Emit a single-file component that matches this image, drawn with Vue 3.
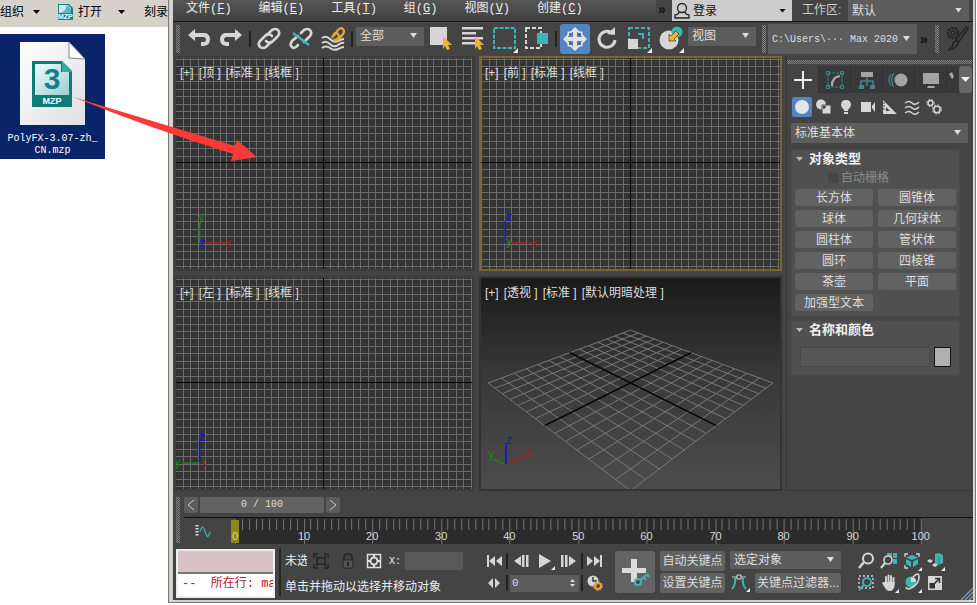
<script setup>
import { ref } from 'vue'

const fmt = n => Math.round(n * 10) / 10

const menus = [
  { name: '文件', key: 'F' },
  { name: '编辑', key: 'E' },
  { name: '工具', key: 'T' },
  { name: '组', key: 'G' },
  { name: '视图', key: 'V' },
  { name: '创建', key: 'C' }
]

const L = '#d6d6d6'
const T = '#3fb4b4'
const corner = '<path d="M27 23v5h-5z" fill="#eee"/>'

const icons = {
  undo: `<path d="M3 10 10 4v4h10q5 1 5 6.500T19 21h-3v-4h3q2-.5 2-2.500T19 12h-9v4z" fill="${L}"/>`,
  redo: `<path d="M25 10 18 4v4H8q-5 1-5 6.500T9 21h3v-4H9q-2-.5-2-2.500T9 12h9v4z" fill="${L}"/>`,
  link: `<g fill="none" stroke="${L}" stroke-width="2.600" stroke-linecap="round"><path d="M12 10l5-5q3-2 6 0 2.500 3 0 6l-6 6q-3 2-6-1"/><path d="M16 17l-5 5q-3 2-6 0-2.500-3 0-6l6-6q3-2 6 1"/></g>`,
  unlink: `<g fill="none" stroke="${L}" stroke-width="2.600" stroke-linecap="round"><path d="M14 8l3-3q3-2 6 0 2.500 3 0 6l-6 6M11 20l-2 2q-3 2-5-1-1-2 1-5l6-5"/></g><path d="M6 8l16 12" stroke="${T}" stroke-width="2.200"/>`,
  bind: `<g fill="none" stroke="${L}" stroke-width="2"><path d="M3 13q4-3 8 1t8 2 6-2M3 18q4-3 8 1t8 1 6-2M3 23q4-3 8 0t8 1 6-2"/></g><g fill="none" stroke="#e8a33a" stroke-width="2.200"><path d="M15 11l4-6q3-3 5-1t0 5l-4 5q-3 2-5 0"/><path d="M13 13l2-4q2-2 4 0t0 4l-3 3"/></g>`,
  pick: `<path d="M3 2h17v18H3z" fill="${L}"/><path d="M16 11l9 9h-4l2 4-3 1-2-4-2 3z" fill="#f6b034"/>`,
  byname: `<g fill="${L}"><path d="M3 2h21v2.500H3zM3 7h14v2.500H3zM3 12h21v2.500H3zM3 17h13v2.500H3z"/></g><path d="M16 11l9 9h-4l2 4-3 1-2-4-2 3z" fill="#f6b034"/>`,
  rect: `<rect x="3" y="3" width="21" height="20" fill="none" stroke="${T}" stroke-width="2" stroke-dasharray="4 1.500"/>` + corner,
  cross: `<rect x="3" y="3" width="15" height="20" fill="none" stroke="${L}" stroke-width="2" stroke-dasharray="4 2"/><path d="M14 8h11v11H14z" fill="${T}"/>`,
  move: `<path d="M14 2l5 5h-3v5h5V9l5 5-5 5v-3h-5v5h3l-5 5-5-5h3v-5H7v3l-5-5 5-5v3h5V7H9z" fill="#e4e4e4"/><path d="M8 11V8h3M17 8h3v3M20 17v3h-3M11 20H8v-3" fill="none" stroke="#e4e4e4" stroke-width="3"/><path d="M9 11V9h2M17 9h2v2M19 17v2h-2M11 19H9v-2" fill="none" stroke="#39465c" stroke-width="1.500"/>`,
  rotate: `<path d="M19 8a8 8 0 1 0 3 7" fill="none" stroke="${L}" stroke-width="3"/><path d="M14 9l8 1V2z" fill="${L}"/>`,
  scale: `<rect x="4" y="3" width="20" height="20" fill="none" stroke="${T}" stroke-width="2" stroke-dasharray="4 2"/><path d="M3 14h10v10H3z" fill="${L}"/><path d="M13 9h5v5" fill="none" stroke="${T}" stroke-width="2"/>` + corner,
  place: `<circle cx="12" cy="15" r="9.500" fill="${L}"/><circle cx="20" cy="7" r="5.500" fill="${T}"/><path d="M19 6l3 3-5 5 2 2h-7V9l2 2z" fill="#f6b034" stroke="#5f4818" stroke-width=".8"/>` + corner,
  brush: `<g fill="none" stroke="#252525"><circle cx="9" cy="8" r="5" stroke-width="2.400" stroke-dasharray="2.500 1"/><circle cx="9" cy="8" r="2" stroke-width="1.300"/><path d="M24 3l-9 14-3-2L22 2zM14 17q0 6-10 8 5-2 5-6 1-4 5-2z" stroke-width="1.500"/></g>`
}

const toolsA = ['undo', 'redo']
const toolsB = ['link', 'unlink', 'bind']
const toolsC = ['pick', 'byname', 'rect', 'cross']
const toolsD = ['move', 'rotate', 'scale', 'place']
const toolNames = {
  undo: '撤消', redo: '重做', link: '链接', unlink: '断开链接', bind: '绑定', pick: '选择', byname: '按名称选择',
  rect: '矩形选择', cross: '窗口/交叉', move: '移动', rotate: '旋转', scale: '缩放', place: '放置'
}

const G = '#a4a4a4'
const D = '#3a8888'
const tabs = [
  { id: '创建', svg: '<path d="M11 3h2v8h8v2h-8v8h-2v-8H3v-2h8z" fill="#eee"/>' },
  { id: '修改', svg: `<rect x="5" y="5" width="14" height="14" fill="none" stroke="${D}" stroke-dasharray="3 1"/><g fill="none" stroke="${D}"><path d="M3.500 3.500h3v3h-3zM17.500 3.500h3v3h-3zM3.500 17.500h3v3h-3zM17.500 17.500h3v3h-3z"/></g><path d="M9 18q0-9 8-10" fill="none" stroke="${G}" stroke-width="2.500"/>` },
  { id: '层次', svg: `<path d="M6 4h12v5H6z" fill="${G}"/><path d="M12 9v4M6 18v-5h12v5M12 13v5" fill="none" stroke="${D}" stroke-width="1.500"/><path d="M4 17h5v4H4zM15 17h5v4h-5z" fill="${D}"/>` },
  { id: '运动', svg: `<circle cx="14" cy="12" r="6.500" fill="${G}"/><path d="M7 5q-5 7 0 14M4 6q-4 6 0 12" fill="none" stroke="${D}" stroke-width="1.300"/>` },
  { id: '显示', svg: `<path d="M4 5h16v11H4zM9 18h6l1 2H8z" fill="${G}"/>` },
  { id: '实用程序', svg: `<path d="M2 6l3-2 2 5-2 2z" fill="${G}"/>` }
]

const cats = [
  { id: '几何体', svg: '<circle cx="10" cy="10" r="7" fill="#e4e4e4"/>' },
  { id: '图形', svg: `<circle cx="7" cy="7.500" r="5" fill="${L}"/><path d="M8 8h9v9H8z" fill="${L}" stroke="#444"/><path d="M9 9h3q0 3-3 3z" fill="#444"/>` },
  { id: '灯光', svg: `<path d="M10 3q5 0 5 5 0 2-3 5v1H8v-1Q5 10 5 8q0-5 5-5zM8 15h4v2H8z" fill="${L}"/>` },
  { id: '摄影机', svg: `<path d="M3 5h10v10H3zM14 9l3-4v10l-3-4z" fill="${L}"/>` },
  { id: '辅助对象', svg: `<path d="M3 3l14 14H3zm3 7v4h4z" fill="${L}" fill-rule="evenodd"/><path d="M3 6h2M3 9h2M3 12h2" stroke="#444"/>` },
  { id: '空间扭曲', svg: `<path d="M3 6q4-3 7 0t7-1M3 11q4-3 7 0t7-1M3 16q4-3 7 0t7-1" fill="none" stroke="${L}" stroke-width="1.400"/>` },
  { id: '系统', svg: `<g fill="none" stroke="${L}"><circle cx="6.500" cy="6" r="2.500" stroke-width="1.400" /><circle cx="6.500" cy="6" r="3.700" stroke-dasharray="1.500 1.500"/><circle cx="13" cy="12.500" r="3.200" stroke-width="1.500"/><circle cx="13" cy="12.500" r="4.600" stroke-dasharray="1.800 1.800"/></g>` }
]
const activeCat = ref('几何体')

const objects = ['长方体', '圆锥体', '球体', '几何球体', '圆柱体', '管状体', '圆环', '四棱锥', '茶壶', '平面', '加强型文本']

// Orthographic grid: evenly spaced lines around the view centre.
const flat = []
for (let i = -21; i <= 21; i++) {
  if (!i) continue
  const x = 150 + Math.round(i * 7.43)
  flat.push(`M${x} -10V230`)
  const y = 105 + Math.round(i * 7.43)
  flat.push(`M-10 ${y}H320`)
}
const flatPath = flat.join('')

// Perspective grid: ground-plane coordinates in [-1, 1] projected to the view.
const project = (u, v) => {
  const w = 1 - 0.171 * (u + v)
  return `${fmt(151 + (71.5 * (u - v)) / w)} ${fmt(105.5 + (35.6 * (u + v)) / w)}`
}
let persp = ''
for (let i = -7; i <= 7; i++) {
  if (!i) continue
  persp += `M${project(i / 7, -1)}L${project(i / 7, 1)}M${project(-1, i / 7)}L${project(1, i / 7)}`
}
const perspAxes = `M${project(0, -1)}L${project(0, 1)}M${project(-1, 0)}L${project(1, 0)}`

const R = '#b01820'
const B = '#1515b8'
const N = '#128a12'
const views = [
  {
    id: 'top', labels: ['[+]', '[顶 ]', '[标准 ]', '[线框 ]'],
    lines: [['M26 186V164', N], ['M30 186H52', R]],
    marks: [['y', 25, 164, N], ['z', 26, 190, B], ['x', 52, 190, R]]
  },
  {
    id: 'front', active: true, labels: ['[+]', '[前 ]', '[标准 ]', '[线框 ]'],
    lines: [['M25 186V164', B], ['M31 186H52', R]],
    marks: [['z', 26, 164, B], ['y', 26, 188, '#3c8a1c'], ['x', 52, 190, R]]
  },
  {
    id: 'left', labels: ['[+]', '[左 ]', '[标准 ]', '[线框 ]'],
    lines: [['M26 186V164', B], ['M8 186H26', N]],
    marks: [['z', 26, 164, B], ['x', 27, 189, R], ['y', 1, 189, N]]
  },
  {
    id: 'persp', persp: true, labels: ['[+]', '[透视 ]', '[标准 ]', '[默认明暗处理 ]'],
    lines: [['M26 187V166', B], ['M28 187L45 178', R], ['M24 187L13 182', N]],
    marks: [['z', 26, 167, B], ['x', 45, 180, R], ['y', 8, 181, N]]
  }
]

const ticks = Array.from({ length: 101 }, (_, i) => ({ i, x: Math.round(6 + i * 6.85), major: i % 10 === 0 }))

const play = {
  first: `<path d="M3 4h2v12H3zM11 5v10l-6-5zM18 5v10l-6-5z" fill="${L}"/>`,
  prev: `<path d="M9 5v10l-7-5zM10 4h2.500v12H10zM14 4h2.500v12H14z" fill="${L}"/>`,
  play: `<path d="M4 3l12 7-12 7z" fill="${L}"/><path d="M20 15v4h-4z" fill="#eee"/>`,
  next: `<path d="M11 5v10l7-5zM3 4h2.500v12H3zM7 4h2.500v12H7z" fill="${L}"/>`,
  last: `<path d="M15 4h2v12h-2zM9 5v10l6-5zM2 5v10l6-5z" fill="${L}"/>`,
  step: `<path d="M9 5v10l-5-5zM11 5v10l5-5z" fill="${L}"/>`,
  time: `<circle cx="8" cy="8" r="5.500" fill="${L}"/><path d="M8 4v4h4" stroke="#333" stroke-width="1.400" fill="none"/><circle cx="13" cy="13" r="3" fill="none" stroke="#e8a33a" stroke-width="2.200"/><circle cx="13" cy="13" r="4.500" fill="none" stroke="#e8a33a" stroke-dasharray="1.800 1.700"/>`
}

const c2 = '<path d="M20 16v4h-4z" fill="#eee"/>'
const navs = [
  ['缩放', `<circle cx="12" cy="7.500" r="5" fill="none" stroke="${L}" stroke-width="2"/><path d="M8 11l-5 6" stroke="${L}" stroke-width="2.500"/>`],
  ['缩放所有视图', `<path d="M8 2h5v5H8zM14 2h4v5h-4zM8 8h5v4H8zM14 8h4v5h-4z" fill="${T}"/><circle cx="9" cy="9" r="4" fill="#444" stroke="${L}" stroke-width="1.600"/><path d="M6 12l-4 5" stroke="${L}" stroke-width="2.200"/>`],
  ['最大化显示', `<path d="M3 6V3h3M14 3h3v3M3 14v3h3" fill="none" stroke="${L}" stroke-width="1.300"/><path d="M10 4l6 2.500-6 2.500-6-2.500zM4 8l5 2.500v5.500l-5-3zM16 8l-5 2.500v5.500l5-3z" fill="${T}"/>` + c2],
  ['所有视图最大化', `<path d="M10 3l4-1 4 2v8l-4 2-4-2z" fill="${T}"/><path d="M14 6v8" stroke="#286" /><path d="M2 10l3-2 3 2-3 2zM7 14l3-2 3 2-3 2z" fill="${L}"/>` + c2],
  ['缩放区域', `<rect x="3" y="3" width="14" height="12" fill="none" stroke="${L}" stroke-dasharray="2 2" stroke-width="1.400"/><circle cx="11" cy="9" r="4" fill="#444" stroke="${T}" stroke-width="1.800"/><path d="M8 12l-5 5" stroke="${T}" stroke-width="2.200"/>`],
  ['平移', `<path d="M7 10V4M9.500 10V2.500M12 10V3M14.500 11V5" stroke="${L}" stroke-width="1.900" stroke-linecap="round"/><path d="M6 9h9.500v4q-1 5-5 5-3 0-5-4L3 10l1.500-1z" fill="${L}"/>` + c2],
  ['环绕', `<circle cx="9" cy="9" r="5.500" fill="${T}"/><path d="M9 9h5q0-5-5-5z" fill="${L}"/><path d="M4 14q1 4 7 0t6-10-6 0" fill="none" stroke="${L}" stroke-width="1.600"/>` + c2],
  ['最大化视口', `<path d="M3 3h14v14H3z" fill="${L}"/><path d="M4.500 10H10v5.500H4.500z" fill="#333"/><path d="M9 11l5-5M10 5.500h4.500V10" stroke="#333" stroke-width="1.600" fill="none"/>`]
]
</script>

<template>
  <div class="desktop">
    <aside class="explorer">
      <div class="exbar">
        <button class="exbtn">组织<i class="tri"></i></button>
        <button class="exbtn open">
          <svg width="17" height="17" viewBox="0 0 17 17">
            <path d="M1 0h11l4 4v12H1z" fill="#0f8585" />
            <path d="M2 1h9l3 3v5H2z" fill="#cfe9e7" />
            <path d="M2 9q6 0 8-8l4 4v4z" fill="#5db9b2" />
            <text x="1" y="15" class="mzp-sm">MZP</text>
          </svg>
          打开<i class="tri"></i>
        </button>
        <button class="exbtn">刻录</button>
      </div>
      <figure class="file">
        <svg width="66" height="86" viewBox="0 0 66 86">
          <defs>
            <linearGradient id="pg" x1="0" y1="0" x2="1" y2="1"><stop offset="0" stop-color="#fff" /><stop offset="1" stop-color="#dedee4" /></linearGradient>
            <linearGradient id="tg" x1="0" y1="0" x2="1" y2="1"><stop offset="0" stop-color="#f2fbfb" /><stop offset="1" stop-color="#9bcfd1" /></linearGradient>
          </defs>
          <path d="M0 1h49l16 17v66H0z" fill="url(#pg)" />
          <path d="M49 1v16l16 1z" fill="#fff" stroke="#888" stroke-width="1" />
          <path d="M12 20h30l10 10v36H12z" fill="#0d7b78" />
          <path d="M15 23h26v8h8v23H15z" fill="url(#tg)" />
          <path d="M42 20v11h10z" fill="#35aaa2" />
          <text x="32" y="48" class="three">3</text>
          <text x="32" y="63" class="mzp">MZP</text>
        </svg>
        <figcaption>PolyFX-3.07-zh_<br>CN.mzp</figcaption>
      </figure>
    </aside>

    <main class="app">
      <header class="top">
        <nav class="menu">
          <a v-for="m in menus" :key="m.key" href="#">{{ m.name }}(<u>{{ m.key }}</u>)</a>
        </nav>
        <span class="more">»</span>
        <button class="login">
          <svg width="16" height="18" viewBox="0 0 16 18" fill="none" stroke="#222" stroke-width="1.300"><circle cx="8" cy="6" r="4.500" /><path d="M5 10q0 2-4 3v3h14v-3q-4-1-4-3" /></svg>
          登录<i class="tri"></i>
        </button>
        <label class="ws" for="ws">工作区:</label>
        <span class="dd wsdd"><select id="ws"><option>默认</option></select></span>
      </header>

      <div class="tools">
        <i class="grip"></i>
        <button v-for="t in toolsA" :key="t" class="tool" :aria-label="toolNames[t]"><svg width="28" height="28" viewBox="0 0 28 28" v-html="icons[t]"></svg></button>
        <i class="sep"></i>
        <button v-for="t in toolsB" :key="t" class="tool" :aria-label="toolNames[t]"><svg width="28" height="28" viewBox="0 0 28 28" v-html="icons[t]"></svg></button>
        <i class="sep"></i>
        <span class="dd small"><select aria-label="选择过滤器"><option>全部</option></select></span>
        <button v-for="t in toolsC" :key="t" class="tool" :aria-label="toolNames[t]"><svg width="28" height="28" viewBox="0 0 28 28" v-html="icons[t]"></svg></button>
        <i class="sep"></i>
        <button v-for="t in toolsD" :key="t" class="tool" :class="{ on: t === 'move' }" :aria-label="toolNames[t]"><svg width="28" height="28" viewBox="0 0 28 28" v-html="icons[t]"></svg></button>
        <span class="dd small"><select aria-label="参考坐标系"><option>视图</option></select></span>
        <i class="grip late"></i>
        <span class="dd path"><select aria-label="项目文件夹"><option>C:\Users\··· Max 2020</option></select></span>
        <span class="more">»</span>
        <i class="grip"></i>
        <button class="tool" aria-label="绘制"><svg width="28" height="28" viewBox="0 0 28 28" v-html="icons.brush"></svg></button>
      </div>

      <div class="work">
        <section class="views">
          <div v-for="v in views" :key="v.id" class="view" :class="{ active: v.active, persp: v.persp }">
            <svg class="scene" viewBox="0 0 302 212" preserveAspectRatio="xMidYMid slice">
              <template v-if="v.persp">
                <path :d="persp" fill="none" stroke="#787878" />
                <path :d="perspAxes" fill="none" stroke="#000" stroke-width="1.400" />
              </template>
              <g v-else shape-rendering="crispEdges">
                <path :d="flatPath" transform="translate(.5 .5)" fill="none" stroke="#6c6c6c" />
                <path d="M150.500 -10V230M-10 105.500H320" fill="none" stroke="#000" />
              </g>
              <path v-for="l in v.lines" :key="l[0]" :d="l[0]" fill="none" :stroke="l[1]" stroke-width="1.500" />
              <text v-for="m in v.marks" :key="m[0]" :x="m[1]" :y="m[2]" :fill="m[3]" class="mark">{{ m[0] }}</text>
            </svg>
            <div class="vlabels"><span v-for="t in v.labels" :key="t">{{ t }}</span></div>
          </div>
        </section>

        <aside class="panel">
          <i class="hgrip"></i>
          <div class="tabs">
            <button v-for="(t, i) in tabs" :key="t.id" class="tab" :class="{ on: i === 0 }" :aria-label="t.id"><svg width="24" height="24" viewBox="0 0 24 24" v-html="t.svg"></svg></button>
            <button class="tabmore" aria-label="更多"><i class="tri"></i></button>
          </div>
          <div class="cats">
            <button v-for="c in cats" :key="c.id" class="cat" :class="{ on: c.id === activeCat }" :aria-label="c.id" @click="activeCat = c.id"><svg width="20" height="20" viewBox="0 0 20 20" v-html="c.svg"></svg></button>
          </div>
          <span class="dd prim"><select aria-label="对象类别"><option>标准基本体</option></select></span>
          <section class="roll">
            <h2><i class="tri"></i>对象类型<i class="dots"></i></h2>
            <label class="auto"><input type="checkbox" disabled>自动栅格</label>
            <div class="objs"><button v-for="o in objects" :key="o">{{ o }}</button></div>
          </section>
          <section class="roll">
            <h2><i class="tri"></i>名称和颜色<i class="dots"></i></h2>
            <div class="namerow"><input type="text" aria-label="名称"><button class="swatch" aria-label="颜色"></button></div>
          </section>
        </aside>
      </div>

      <div class="time">
        <i class="grip tall"></i>
        <div class="timecol">
          <div class="slider">
            <button class="arr" aria-label="上一帧"><svg width="8" height="12" viewBox="0 0 8 12"><path d="M7 1L1 6l6 5" fill="none" stroke="#ccc" /></svg></button>
            <button class="thumb">0 / 100</button>
            <button class="arr" aria-label="下一帧"><svg width="8" height="12" viewBox="0 0 8 12"><path d="M1 1l6 5-6 5" fill="none" stroke="#ccc" /></svg></button>
          </div>
          <div class="ruler">
            <button class="curve" aria-label="迷你曲线编辑器"><svg width="16" height="14" viewBox="0 0 16 14"><path d="M2 1v12" stroke="#ddd" stroke-width="3" stroke-dasharray="1.500 1.500" /><path d="M5 8q2-8 4-3t3 7 3-4" fill="none" stroke="#3fa4a4" stroke-width="1.400" /></svg></button>
            <svg class="marks" viewBox="0 0 743 28" preserveAspectRatio="xMinYMid meet">
              <path d="M6 0h686v26H6z" fill="#2b2b2b" />
              <path v-for="t in ticks" :key="t.i" :d="`M${t.x + 0.5} 1V${t.major ? 26 : 12}`" stroke="#757575" />
              <path d="M2 2h8v23H2z" fill="#918719" />
              <template v-for="t in ticks" :key="'l' + t.i"><text v-if="t.major" :x="t.x" y="22" class="num" :fill="t.i ? '#d8d8d8' : '#e6dc6a'">{{ t.i }}</text></template>
            </svg>
          </div>
        </div>
      </div>

      <footer class="status">
        <div class="listener"><div class="pink"></div><div class="white">--&nbsp; 所在行: mac</div></div>
        <i class="vsep"></i>
        <div class="info">
          <div class="inforow">
            <span class="none">未选择</span>
            <svg width="18" height="18" viewBox="0 0 18 18" fill="none" stroke="#252525" stroke-width="1.500"><path d="M2 6V2h4M12 2h4v4M16 12v4h-4M6 16H2v-4M5 6h8v6H5zM4 4l2 2M14 4l-2 2M4 14l2-2M14 14l-2-2" /></svg>
            <svg width="14" height="18" viewBox="0 0 14 18"><path d="M3 8V5q0-3 4-3t4 3v3" fill="none" stroke="#252525" stroke-width="1.500" /><path d="M2 8h10v8H2z" fill="#555" stroke="#252525" /><path d="M7 10v4" stroke="#222" stroke-width="2" /></svg>
            <svg width="16" height="16" viewBox="0 0 16 16"><path d="M1.500 1.500h13v13h-13z" fill="none" stroke="#ddd" stroke-width="1.500" /><path d="M8 1v14M1 8h14" stroke="#ddd" stroke-width="2" /><circle cx="8" cy="8" r="3.500" fill="#444" stroke="#ddd" stroke-width="2" /></svg>
            <label class="xl" for="xv">X:</label><input id="xv" class="xv" type="text">
          </div>
          <p>单击并拖动以选择并移动对象</p>
        </div>
        <div class="playback">
          <button aria-label="转至开头"><svg width="20" height="20" viewBox="0 0 20 20" v-html="play.first"></svg></button>
          <i class="psep"></i>
          <button aria-label="后退"><svg width="20" height="20" viewBox="0 0 20 20" v-html="play.prev"></svg></button>
          <button aria-label="播放"><svg width="20" height="20" viewBox="0 0 20 20" v-html="play.play"></svg></button>
          <button aria-label="前进"><svg width="20" height="20" viewBox="0 0 20 20" v-html="play.next"></svg></button>
          <i class="psep"></i>
          <button aria-label="转至结尾"><svg width="20" height="20" viewBox="0 0 20 20" v-html="play.last"></svg></button>
          <button aria-label="关键点模式"><svg width="20" height="20" viewBox="0 0 20 20" v-html="play.step"></svg></button>
          <i class="psep"></i>
          <span class="spin"><input type="text" value="0" aria-label="当前帧"><svg width="7" height="10" viewBox="0 0 7 10"><path d="M1 4l2.500-3L6 4zM1 6l2.500 3L6 6z" fill="#ddd" /></svg></span>
          <i class="psep"></i>
          <button aria-label="时间配置"><svg width="20" height="20" viewBox="0 0 20 20" v-html="play.time"></svg></button>
        </div>
        <button class="bigkey" aria-label="设置关键点">
          <svg width="32" height="32" viewBox="0 0 32 32"><path d="M12 3h6v9h9v5h-9v9h-6v-9H3v-5h9z" fill="#dcdcdc" /><path d="M20 25l9-7M25 21l2 3M28 18l2 3" fill="none" stroke="#3fb4b4" stroke-width="2.200" /><circle cx="19" cy="26" r="3" fill="#444" stroke="#3fb4b4" stroke-width="2.200" /></svg>
        </button>
        <div class="keys">
          <button>自动关键点</button>
          <button>设置关键点</button>
        </div>
        <div class="filters">
          <span class="dd sel"><select aria-label="关键点集"><option>选定对象</option></select></span>
          <div class="frow">
            <button class="tang" aria-label="切线"><svg width="20" height="20" viewBox="0 0 20 20"><path d="M2 16q4-4 3-11M16 16q-4-4-3-11" fill="none" stroke="#3fb4b4" stroke-width="2" /><path d="M2 4h5M11 4h5" stroke="#ccc" /><path d="M7 2h4v4H7z" fill="none" stroke="#ddd" /><path d="M20 15v4h-4z" fill="#eee" /></svg></button>
            <button class="filt"><span>关键点过滤器...</span></button>
          </div>
        </div>
        <div class="navs">
          <button v-for="n in navs" :key="n[0]" :aria-label="n[0]"><svg width="21" height="20" viewBox="0 0 21 20" v-html="n[1]"></svg></button>
        </div>
        <svg class="resize" width="13" height="13" viewBox="0 0 13 13"><path d="M1 13L13 1M5 13l8-8M9 13l4-4" stroke="#7c93ae" stroke-width="1.500" /></svg>
      </footer>
    </main>

    <svg class="pointer" width="190" height="70" viewBox="0 0 190 70">
      <path d="M1 1L163 50L165 44L185 61L159 65L161 58Q80 33 1 1z" fill="#f93a37" />
    </svg>
  </div>
</template>

<style>
body { background: #fff; }
</style>

<style scoped>
* { box-sizing: border-box; }
.desktop {
  position: relative;
  display: flex;
  min-height: 100vh;
  padding-bottom: 3px;
  font: 12px/16px "Liberation Sans", "Noto Sans CJK SC", sans-serif;
  color: #ddd;
  overflow: hidden;
}
button, select, input { font: inherit; color: inherit; border: 0; padding: 0; margin: 0; background: none; border-radius: 0; }
button { display: flex; align-items: center; justify-content: center; white-space: nowrap; }
svg { display: block; flex: none; }
.tri { width: 7px; height: 4px; background: currentColor; clip-path: polygon(0 0, 100% 0, 50% 100%); flex: none; }

.explorer { flex: none; width: 169px; color: #000; overflow: hidden; }
.exbar { display: flex; height: 27px; padding-bottom: 3px; background: #d6d2ca; gap: 17px; }
.exbtn { gap: 9px; }
.exbtn.open { gap: 4px; }
.exbtn.open .tri { margin-left: 12px; }
.exbtn:last-child { margin-left: 2px; }
.file { margin: 7px 0 0; width: 105px; height: 125px; padding-top: 7px; background: #0a246a; color: #fff; display: flex; flex-direction: column; align-items: center; gap: 6px; }
.file figcaption { font: 10px/12px "Liberation Mono", monospace; text-align: center; }
.mzp-sm { font: bold 7px "Liberation Sans", sans-serif; fill: #fff; }
.mzp { font: bold 9px "Liberation Sans", sans-serif; fill: #fff; text-anchor: middle; }
.three { font: bold 30px "Liberation Sans", sans-serif; fill: #167e85; text-anchor: middle; }
.pointer { position: absolute; left: 72px; top: 96px; }

.app {
  flex: 1;
  min-width: 0;
  display: flex;
  flex-direction: column;
  background: #444;
  border: 2px solid #d6d3ce;
  border-top: 0;
  border-left-width: 4px;
  outline: 1px solid #777;
  margin-right: 2px;
}
.top { display: flex; height: 22px; border-bottom: 1px solid #141414; background: #444; }
.menu { flex: 1; display: flex; gap: 27px; padding-left: 13px; background: linear-gradient(#565656, #404040); font-family: "Liberation Mono", "Noto Sans CJK SC", monospace; line-height: 18px; }
.menu a { color: #eee; text-decoration: none; white-space: nowrap; }
.more { width: 10px; text-align: center; font-size: 14px; font-weight: bold; color: #111; line-height: 18px; }
.top .more { width: 16px; padding-right: 4px; }
.login { width: 120px; background: #cdcdcd; color: #111; padding: 0 6px 0 2px; gap: 3px; justify-content: flex-start; }
.login .tri { margin-left: auto; }
.ws { width: 56px; padding-left: 10px; line-height: 20px; color: #ccc; }

.dd { position: relative; display: block; background: #5d5d5d; }
.dd select { appearance: none; display: block; width: 100%; height: 100%; padding: 0 16px 0 4px; color: #ddd; outline: 0; }
.dd::after { content: ""; position: absolute; right: 7px; top: 50%; width: 7px; height: 5px; margin-top: -3px; background: #ddd; clip-path: polygon(0 0, 100% 0, 50% 100%); pointer-events: none; }
.wsdd { width: 121px; margin-right: 4px; }

.tools { display: flex; align-items: center; gap: 2px; height: 34px; padding-left: 3px; }
.grip { width: 4px; height: 28px; margin-right: 2px; background: repeating-conic-gradient(#444 0 25%, #888 0 50%) 0 0 / 2px 2px; flex: none; }
.grip.late { margin: 0 0 0 4px; }
.sep { width: 2px; height: 16px; margin: 0 1px; background: #222; flex: none; }
.tool { width: 30px; height: 30px; flex: none; }
.tool.on { background: #5584c4; border-radius: 3px; }
.dd.small { width: 68px; height: 19px; margin-bottom: 6px; flex: none; }
.dd.path { flex: 1; height: 30px; font: 10px "Liberation Mono", monospace; }
.tools .more { margin-right: 4px; }

.work { flex: 1; display: flex; gap: 4px; padding-left: 1px; min-height: 0; }
.views { flex: 1; min-width: 0; display: grid; grid-template-columns: 300fr 303fr; grid-template-rows: 1fr 1fr; gap: 5px; }
.view { position: relative; overflow: hidden; background: #343434; border: 2px solid #3c3c3c; }
.view.active { border-color: #76672c; }
.view.persp { background: linear-gradient(#1a1a1a, #383838 45%, #4c4c4c); border-color: #333; }
.scene { position: absolute; inset: 0; width: 100%; height: 100%; }
.mark { font: 12px "Liberation Sans", sans-serif; }
.vlabels { position: absolute; left: 4px; top: 7px; display: flex; gap: 5px; white-space: nowrap; color: #dcdcdc; }

.panel { flex: none; width: 187px; padding: 4px 1px 0 0; border-left: 1px solid #383838; border-bottom: 1px solid #383838; display: flex; flex-direction: column; }
.hgrip { height: 4px; background: repeating-conic-gradient(#444 0 25%, #888 0 50%) 0 0 / 2px 2px; }
.tabs { display: flex; margin-top: 2px; height: 27px; background: #383838; overflow: hidden; }
.tab { width: 32px; flex: none; border-right: 1px solid #303030; }
.tab.on { background: #444; }
.tab:nth-child(6) { flex: 1; width: 0; min-width: 0; justify-content: flex-start; overflow: hidden; border: 0; }
.tabmore { width: 13px; margin-left: auto; background: #666; border-radius: 3px; flex: none; color: #eee; }
.tabmore .tri { width: 9px; height: 5px; }
.cats { display: flex; gap: 2px; margin: 4px 5px 6px; }
.cat { width: 20px; height: 20px; }
.cat.on { background: #5584c4; border-radius: 2px; }
.dd.prim { height: 20px; margin: 0 4px 6px; }
.roll { width: 169px; margin: 0 0 3px 4px; padding: 0 4px; background: #505050; border: 1px solid #494949; }
.roll h2 { display: flex; align-items: center; gap: 6px; margin: 0; height: 18px; font-size: 13px; color: #f0f0f0; }
.roll h2 .tri { color: #bbb; }
.dots { width: 6px; height: 6px; margin: 0 2px 0 auto; background: radial-gradient(circle, #999 40%, transparent 50%) 0 0 / 2px 2px; }
.auto { display: flex; align-items: center; gap: 3px; margin: 2px 0 3px 32px; height: 16px; color: #8b8b8b; }
.auto input { appearance: none; width: 10px; height: 10px; background: #464646; }
.objs { display: grid; grid-template-columns: 1fr 1fr; gap: 4px 5px; margin: 0 -1px 5px; }
.objs button { height: 17px; background: #626262; border-radius: 3px; }
.namerow { display: flex; gap: 4px; padding: 8px 4px 8px; }
.namerow input { flex: 1; min-width: 0; height: 20px; border: 1px solid #494949; background: #565656; }
.swatch { width: 17px; height: 20px; background: #b0b0b0; border: 1px solid #111; }

.time { display: flex; padding: 6px 0 0 3px; gap: 4px; }
.grip.tall { height: 46px; margin: 0; }
.timecol { flex: 1; min-width: 0; }
.slider { display: flex; gap: 2px; height: 16px; }
.arr { width: 14px; background: #5c5c5c; border-radius: 2px; }
.thumb { width: 124px; background: #626262; border-radius: 2px; font: 10px "Liberation Mono", monospace; }
.ruler { display: flex; margin-top: 4px; border-top: 1px solid #111; }
.curve { width: 42px; height: 26px; padding-right: 4px; }
.marks { flex: 1; min-width: 0; width: 0; margin-left: 3px; }
.num { font: 11px "Liberation Sans", sans-serif; text-anchor: middle; }

.status { position: relative; display: flex; padding: 2px 0 4px 3px; height: 54px; align-items: flex-start; }
.listener { width: 99px; margin-top: 1px; border: 2px solid #eee; background: #777; display: flex; flex-direction: column; gap: 2px; flex: none; }
.pink { height: 21px; background: #d9c2c5; }
.white { height: 22px; padding-left: 4px; background: #fff; color: #b8141c; line-height: 20px; white-space: nowrap; overflow: hidden; font-family: "Liberation Mono", "Noto Sans CJK SC", monospace; }
.vsep { width: 2px; height: 48px; margin: 0 4px; background: #262626; flex: none; }
.info { width: 199px; flex: none; }
.inforow { display: flex; align-items: center; height: 26px; }
.none { width: 22px; margin-right: 5px; overflow: hidden; white-space: nowrap; color: #eee; }
.inforow svg { margin-right: 11px; }
.inforow svg:nth-of-type(3) { margin-right: 7px; }
.xl { width: 16px; font: 10px "Liberation Mono", monospace; color: #eee; }
.xv { width: 58px; height: 18px; background: #595959; }
.info p { margin: 4px 0 0; line-height: 18px; color: #eee; }
.playback { display: grid; grid-template-columns: 20px 6px 23px 23px 23px 6px 20px; align-items: center; grid-auto-rows: 22px; margin-top: 2px; flex: none; }
.psep { width: 2px; height: 16px; background: #222; justify-self: center; }
.spin { grid-column: span 3; display: flex; align-items: center; height: 17px; background: #5c5c5c; padding-right: 3px; }
.spin input { flex: 1; min-width: 0; width: 0; padding-left: 2px; font: 11px "Liberation Mono", monospace; }
.bigkey { width: 40px; height: 42px; margin: 3px 5px 0 10px; background: #646464; border-radius: 3px; flex: none; }
.keys { display: flex; flex-direction: column; gap: 2px; margin-top: 3px; flex: none; }
.keys button { width: 65px; height: 20px; background: #626262; border-radius: 3px; }
.filters { width: 111px; margin: 3px 15px 0 5px; display: flex; flex-direction: column; gap: 4px; flex: none; }
.dd.sel { height: 18px; }
.frow { display: flex; gap: 5px; height: 20px; }
.filt { flex: 1; min-width: 0; background: #626262; border-radius: 3px; overflow: hidden; }
.tang { flex: none; }
.navs { display: grid; grid-template-columns: repeat(4, 21px); gap: 2px; margin-top: 3px; flex: none; }
.resize { position: absolute; right: 0; bottom: 0; }
</style>
